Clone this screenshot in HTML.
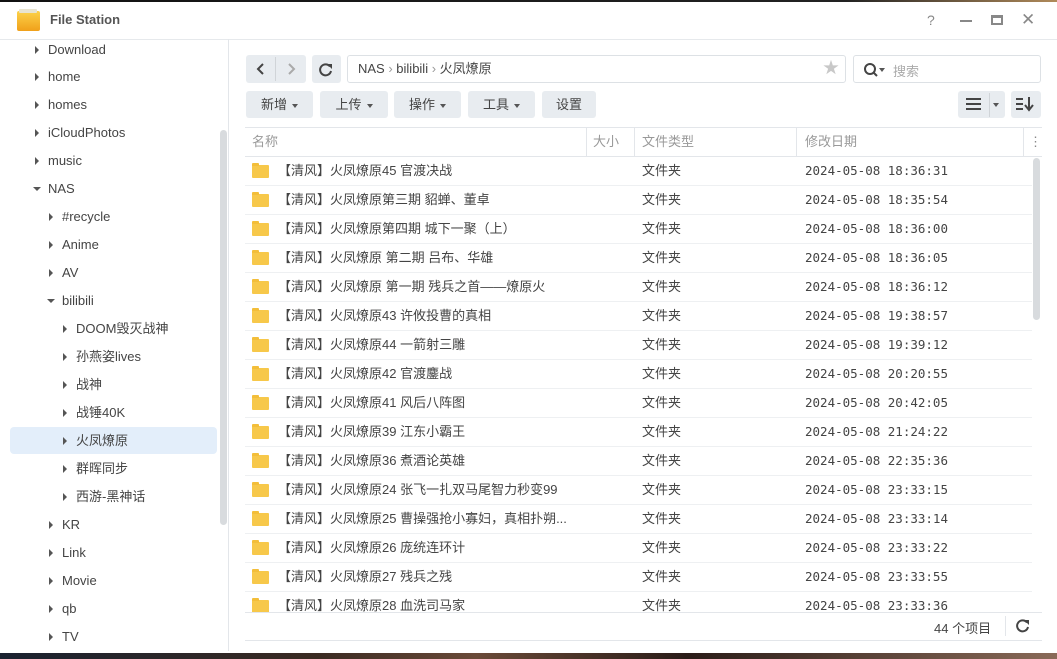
<!DOCTYPE html><html><head><meta charset="utf-8"><style>
*{box-sizing:border-box;margin:0;padding:0}
body{width:1057px;height:659px;overflow:hidden;background:linear-gradient(90deg,#1a2230 0%,#3a2a22 30%,#6a4a38 45%,#2a1c18 65%,#8a6a58 100%);font-family:"Liberation Sans","Noto Sans CJK SC",sans-serif;font-size:13px;color:#333;position:relative}
.win{position:absolute;left:0;top:0;width:1057px;height:653px;background:#fff}
.title{position:absolute;left:0;top:0;width:1057px;height:40px;border-bottom:1px solid #e6e9ec}
.title .t{position:absolute;left:50px;top:12px;font-size:13px;font-weight:bold;color:#555}
.ctl{position:absolute;top:12px;font-size:15px;color:#888}
.side{position:absolute;left:0;top:41px;width:229px;height:612px;border-right:1px solid #e3e6ea;overflow:hidden}
.ti{position:absolute;height:28px;line-height:28px;font-size:13px;color:#444}
.ti:before{content:"";position:absolute;left:-13px;top:10px;border-left:4px solid #555;border-top:4px solid transparent;border-bottom:4px solid transparent}
.ti.open:before{left:-15px;top:12px;border-top:4px solid #555;border-left:4px solid transparent;border-right:4px solid transparent;border-bottom:0}
.btn{position:absolute;background:#e8ecf0;border-radius:3px;height:27px;line-height:27px;text-align:center;color:#444;font-size:13px}
.caret{display:inline-block;margin-left:5px;vertical-align:middle;border-top:4px solid #555;border-left:3px solid transparent;border-right:3px solid transparent}
.path{position:absolute;left:347px;width:499px;height:28px;border:1px solid #dde1e5;border-radius:3px;line-height:26px;padding-left:10px;color:#444}
.search{position:absolute;left:853px;width:188px;height:28px;border:1px solid #dde1e5;border-radius:3px}
.hdr{position:absolute;left:245px;top:127px;width:797px;height:30px;border-top:1px solid #e3e6ea;border-bottom:1px solid #e3e6ea;color:#999;line-height:28px}
.hdr span{position:absolute;top:0}
.sep{position:absolute;top:0;width:1px;height:28px;background:#e3e6ea}
.row{position:absolute;left:245px;width:787px;height:29px;border-bottom:1px solid #eef0f2;line-height:28px;color:#444}
.row .f{position:absolute;left:7px;top:8px;width:17px;height:13px;background:#f7c84a;border-radius:1px}
.row .f:before{content:"";position:absolute;left:0;top:-2px;width:7px;height:3px;background:#f3be3a;border-radius:1px 1px 0 0}
.row .n{position:absolute;left:33px}
.row .k{position:absolute;left:397px}
.row .d{position:absolute;left:560px;font-family:"DejaVu Sans Mono","Liberation Mono",monospace;font-size:12.5px;letter-spacing:0}
</style></head><body>
<div class="win">
<div style="position:absolute;left:0;top:0;width:1057px;height:2px;background:linear-gradient(90deg,#111 0%,#222 80%,#b08a5a 100%)"></div>
<div class="title">
<div style="position:absolute;left:17px;top:11px;width:23px;height:20px;background:linear-gradient(#fcd24a,#f0a01a);border-radius:2px"></div>
<div style="position:absolute;left:19px;top:9px;width:18px;height:4px;background:#e8e4d0;border-radius:1px"></div>
<div class="t">File Station</div>
<div class="ctl" style="left:927px;font-size:14px">?</div>
<div style="position:absolute;left:960px;top:20px;width:12px;height:2px;background:#888"></div>
<div style="position:absolute;left:991px;top:15px;width:12px;height:10px;border:2px solid #888;border-top-width:3px"></div>
<div class="ctl" style="left:1021px;top:10px;font-size:17px">✕</div>
</div>
<div class="side" style="top:39px">
<div class="ti" style="left:48px;top:-3px">Download</div>
<div class="ti" style="left:48px;top:24px">home</div>
<div class="ti" style="left:48px;top:52px">homes</div>
<div class="ti" style="left:48px;top:80px">iCloudPhotos</div>
<div class="ti" style="left:48px;top:108px">music</div>
<div class="ti open" style="left:48px;top:136px">NAS</div>
<div class="ti" style="left:62px;top:164px">#recycle</div>
<div class="ti" style="left:62px;top:192px">Anime</div>
<div class="ti" style="left:62px;top:220px">AV</div>
<div class="ti open" style="left:62px;top:248px">bilibili</div>
<div class="ti" style="left:76px;top:276px">DOOM毁灭战神</div>
<div class="ti" style="left:76px;top:304px">孙燕姿lives</div>
<div class="ti" style="left:76px;top:332px">战神</div>
<div class="ti" style="left:76px;top:360px">战锤40K</div>
<div style="position:absolute;left:10px;top:388px;width:207px;height:27px;background:#e3eefa;border-radius:4px"></div>
<div class="ti" style="left:76px;top:388px">火凤燎原</div>
<div class="ti" style="left:76px;top:416px">群晖同步</div>
<div class="ti" style="left:76px;top:444px">西游-黑神话</div>
<div class="ti" style="left:62px;top:472px">KR</div>
<div class="ti" style="left:62px;top:500px">Link</div>
<div class="ti" style="left:62px;top:528px">Movie</div>
<div class="ti" style="left:62px;top:556px">qb</div>
<div class="ti" style="left:62px;top:584px">TV</div>
<div style="position:absolute;left:220px;top:91px;width:7px;height:395px;background:#d8dbde;border-radius:4px"></div>
</div>
<div class="btn" style="left:246px;top:55px;width:60px;height:28px"></div>
<div style="position:absolute;left:275px;top:57px;width:1px;height:24px;background:#d0d4d8"></div>
<svg style="position:absolute;left:254px;top:62px" width="14" height="14"><path d="M9 2L4 7L9 12" stroke="#444" stroke-width="2" fill="none"/></svg>
<svg style="position:absolute;left:284px;top:62px" width="14" height="14"><path d="M5 2L10 7L5 12" stroke="#aaa" stroke-width="2" fill="none"/></svg>
<div class="btn" style="left:312px;top:55px;width:29px;height:28px"></div>
<svg style="position:absolute;left:318px;top:62px" width="16" height="16"><path d="M12 4.5A5.5 5.5 0 1 0 13 9" stroke="#444" stroke-width="2" fill="none"/><path d="M9 2L14 2L14 7Z" fill="#444"/></svg>
<div class="path" style="top:55px">NAS <span style="color:#999">›</span> bilibili <span style="color:#999">›</span> 火凤燎原<span style="position:absolute;right:6px;top:0;color:#c8c8c8;font-size:16px">★</span></div>
<div class="search" style="top:55px"><svg style="position:absolute;left:9px;top:6px" width="16" height="16"><circle cx="7" cy="7" r="5" stroke="#444" stroke-width="2" fill="none"/><path d="M10.5 10.5L14 14" stroke="#444" stroke-width="2"/></svg><span class="caret" style="position:absolute;left:25px;top:12px;margin:0"></span><span style="position:absolute;left:39px;top:5px;color:#aaa">搜索</span></div>
<div class="btn" style="left:246px;top:91px;width:67px">新增<span class="caret"></span></div>
<div class="btn" style="left:320px;top:91px;width:68px">上传<span class="caret"></span></div>
<div class="btn" style="left:394px;top:91px;width:67px">操作<span class="caret"></span></div>
<div class="btn" style="left:468px;top:91px;width:67px">工具<span class="caret"></span></div>
<div class="btn" style="left:542px;top:91px;width:54px">设置</div>
<div class="btn" style="left:958px;top:91px;width:47px"></div>
<div style="position:absolute;left:989px;top:93px;width:1px;height:24px;background:#d0d4d8"></div>
<div style="position:absolute;left:966px;top:98px;width:15px;height:2px;background:#444;box-shadow:0 5px 0 #444,0 10px 0 #444"></div>
<span class="caret" style="position:absolute;left:993px;top:103px;margin:0"></span>
<div class="btn" style="left:1011px;top:91px;width:30px"></div>
<div style="position:absolute;left:1016px;top:98px;width:7px;height:2px;background:#444;box-shadow:0 5px 0 #444,0 10px 0 #444"></div>
<svg style="position:absolute;left:1024px;top:96px" width="10" height="16"><path d="M5 1V13M1 9L5 14L9 9" stroke="#444" stroke-width="2" fill="none"/></svg>
<div class="hdr"><span style="left:7px">名称</span><div class="sep" style="left:341px"></div><span style="left:348px">大小</span><div class="sep" style="left:389px"></div><span style="left:397px">文件类型</span><div class="sep" style="left:551px"></div><span style="left:560px">修改日期</span><div class="sep" style="left:778px"></div><span style="left:784px;color:#888">⋮</span></div>
<div style="position:absolute;left:1033px;top:158px;width:7px;height:162px;background:#d8dbde;border-radius:4px"></div>
<div style="position:absolute;left:245px;top:612px;width:797px;height:1px;background:#e3e6ea"></div>
<div style="position:absolute;left:934px;top:618px;color:#444">44 个项目</div>
<div style="position:absolute;left:1005px;top:616px;width:1px;height:20px;background:#e3e6ea"></div>
<svg style="position:absolute;left:1015px;top:618px" width="16" height="16"><path d="M12 4.5A5.5 5.5 0 1 0 13 9" stroke="#444" stroke-width="2" fill="none"/><path d="M9 2L14 2L14 7Z" fill="#444"/></svg>
<div style="position:absolute;left:245px;top:640px;width:797px;height:1px;background:#e3e6ea"></div>
</div>
<div style="position:absolute;left:245px;top:157px;width:787px;height:455px;overflow:hidden">
<div style="position:relative;left:-245px;top:-157px">
<div class="row" style="top:157px"><i class="f"></i><span class="n">【清风】火凤燎原45 官渡决战</span><span class="k">文件夹</span><span class="d">2024-05-08 18:36:31</span></div>
<div class="row" style="top:186px"><i class="f"></i><span class="n">【清风】火凤燎原第三期 貂蝉、董卓</span><span class="k">文件夹</span><span class="d">2024-05-08 18:35:54</span></div>
<div class="row" style="top:215px"><i class="f"></i><span class="n">【清风】火凤燎原第四期 城下一聚（上）</span><span class="k">文件夹</span><span class="d">2024-05-08 18:36:00</span></div>
<div class="row" style="top:244px"><i class="f"></i><span class="n">【清风】火凤燎原 第二期 吕布、华雄</span><span class="k">文件夹</span><span class="d">2024-05-08 18:36:05</span></div>
<div class="row" style="top:273px"><i class="f"></i><span class="n">【清风】火凤燎原 第一期 残兵之首——燎原火</span><span class="k">文件夹</span><span class="d">2024-05-08 18:36:12</span></div>
<div class="row" style="top:302px"><i class="f"></i><span class="n">【清风】火凤燎原43 许攸投曹的真相</span><span class="k">文件夹</span><span class="d">2024-05-08 19:38:57</span></div>
<div class="row" style="top:331px"><i class="f"></i><span class="n">【清风】火凤燎原44 一箭射三雕</span><span class="k">文件夹</span><span class="d">2024-05-08 19:39:12</span></div>
<div class="row" style="top:360px"><i class="f"></i><span class="n">【清风】火凤燎原42 官渡鏖战</span><span class="k">文件夹</span><span class="d">2024-05-08 20:20:55</span></div>
<div class="row" style="top:389px"><i class="f"></i><span class="n">【清风】火凤燎原41 风后八阵图</span><span class="k">文件夹</span><span class="d">2024-05-08 20:42:05</span></div>
<div class="row" style="top:418px"><i class="f"></i><span class="n">【清风】火凤燎原39 江东小霸王</span><span class="k">文件夹</span><span class="d">2024-05-08 21:24:22</span></div>
<div class="row" style="top:447px"><i class="f"></i><span class="n">【清风】火凤燎原36 煮酒论英雄</span><span class="k">文件夹</span><span class="d">2024-05-08 22:35:36</span></div>
<div class="row" style="top:476px"><i class="f"></i><span class="n">【清风】火凤燎原24 张飞一扎双马尾智力秒变99</span><span class="k">文件夹</span><span class="d">2024-05-08 23:33:15</span></div>
<div class="row" style="top:505px"><i class="f"></i><span class="n">【清风】火凤燎原25 曹操强抢小寡妇，真相扑朔...</span><span class="k">文件夹</span><span class="d">2024-05-08 23:33:14</span></div>
<div class="row" style="top:534px"><i class="f"></i><span class="n">【清风】火凤燎原26 庞统连环计</span><span class="k">文件夹</span><span class="d">2024-05-08 23:33:22</span></div>
<div class="row" style="top:563px"><i class="f"></i><span class="n">【清风】火凤燎原27 残兵之残</span><span class="k">文件夹</span><span class="d">2024-05-08 23:33:55</span></div>
<div class="row" style="top:592px"><i class="f"></i><span class="n">【清风】火凤燎原28 血洗司马家</span><span class="k">文件夹</span><span class="d">2024-05-08 23:33:36</span></div>
</div></div>
</body></html>
